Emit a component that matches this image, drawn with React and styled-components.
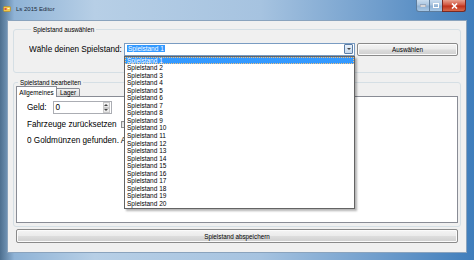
import React from "react";
import styled, { createGlobalStyle } from "styled-components";

const Global = createGlobalStyle`
  html, body { margin: 0; padding: 0; background: #fff; }
  * { box-sizing: border-box; }
  body { font-family: "Liberation Sans", Arial, sans-serif; }
`;

const Window = styled.div`
  width: 474px;
  height: 260px;
  display: flex;
  flex-direction: column;
  padding: 0 7px 7px 7px;
  background: linear-gradient(to right, #4d6f8f 0%, #8fb3d6 3%, #b7cfe6 20%, #a6c3e0 55%, #6f9dcc 80%, #3f7dbb 100%);
  position: relative;
`;

const TitleBar = styled.div`
  height: 20px;
  display: flex;
  align-items: flex-start;
  margin: 0 -7px;
  padding: 0 8px 0 3px;
`;

const TitleIcon = styled.svg`
  width: 8px;
  height: 8px;
  margin-top: 5px;
  flex: none;
`;

const TitleText = styled.div`
  font-size: 6px;
  color: #1a2a3a;
  margin-left: 5px;
  margin-top: 6px;
  line-height: 7px;
  flex: 1;
`;

const CaptionGroup = styled.div`
  display: flex;
  align-items: flex-start;
`;

const CaptionButton = styled.div`
  width: ${p => p.$w}px;
  height: 12px;
  border: 1px solid ${p => (p.$close ? "#7a2a22" : "#5d7c9c")};
  border-top: none;
  border-radius: ${p => p.$radius};
  background: ${p =>
    p.$close
      ? "linear-gradient(to bottom, #e8a290 0%, #d2563f 45%, #c0321b 55%, #d66a4c 100%)"
      : "linear-gradient(to bottom, #c9dcef 0%, #a9c4df 45%, #8eb0d3 55%, #a8c8e6 100%)"};
  display: flex;
  align-items: center;
  justify-content: center;
  margin-left: -1px;
`;

const Client = styled.div`
  flex: 1;
  background: #f0f0f0;
  display: flex;
  flex-direction: column;
  padding: 5px 5px 0 5px;
  border: 1px solid #8aa3bd;
`;

const Group = styled.fieldset`
  margin: ${p => p.$mt || 0}px 0 0 0;
  padding: ${p => p.$pad};
  border: 1px solid #d5dfe5;
  border-radius: 3px;
  min-width: 0;
  height: ${p => p.$h}px;
  flex: none;
`;

const Legend = styled.legend`
  font-size: 6.3px;
  line-height: 7px;
  color: #000;
  padding: 0 2px;
  margin-left: 2px;
`;

const SelectRow = styled.div`
  display: flex;
  align-items: center;
  height: 14px;
`;

const BigLabel = styled.div`
  font-size: 8.2px;
  color: #000;
  white-space: nowrap;
  width: ${p => (p.$w ? `${p.$w}px` : "auto")};
  overflow: hidden;
  flex: none;
`;

const Combo = styled.div`
  position: relative;
  width: 231px;
  height: 13px;
  border: 1px solid #7a9cc2;
  background: #fff;
  display: flex;
  align-items: center;
  padding: 0 1px 0 2px;
  flex: none;
`;

const ComboText = styled.span`
  flex: 1;
  font-size: 6.5px;
  line-height: 8px;
  span {
    background: #3399ff;
    color: #fff;
    padding: 0 1px;
  }
`;

const ComboArrow = styled.div`
  width: 9px;
  height: 10px;
  border: 1px solid #5a7da6;
  border-radius: 1px;
  background: linear-gradient(to bottom, #eaf2fb, #c4d7ec);
  display: flex;
  align-items: center;
  justify-content: center;
`;

const Popup = styled.div`
  position: absolute;
  left: -1px;
  top: 12px;
  width: 231px;
  background: #fff;
  border: 1px solid #646464;
  box-shadow: 2px 2px 2px rgba(0, 0, 0, 0.3);
  z-index: 5;
  display: flex;
  flex-direction: column;
  padding-bottom: 1px;
`;

const PopupItem = styled.div`
  height: 7.55px;
  font-size: 6.5px;
  line-height: 7.55px;
  padding-left: 2px;
  color: ${p => (p.$sel ? "#fff" : "#000")};
  background: ${p => (p.$sel ? "#3399ff" : "transparent")};
  outline: ${p => (p.$sel ? "1px dotted #f0c080" : "none")};
  outline-offset: -1px;
  white-space: nowrap;
`;

const Button = styled.div`
  height: ${p => p.$h}px;
  width: ${p => (p.$w ? `${p.$w}px` : "auto")};
  border: 1px solid #8a8a8a;
  border-radius: 2px;
  background: linear-gradient(to bottom, #f4f4f4 0%, #ebebeb 48%, #dddddd 52%, #cfcfcf 100%);
  box-shadow: inset 0 0 0 1px #fbfbfb;
  font-size: 6.3px;
  color: #000;
  display: flex;
  align-items: center;
  justify-content: center;
  flex: none;
  margin-left: ${p => p.$ml || 0}px;
`;

const Tabs = styled.div`
  display: flex;
  align-items: flex-end;
  height: 11px;
  position: relative;
  z-index: 1;
`;

const Tab = styled.div`
  height: ${p => (p.$active ? 11 : 9)}px;
  width: ${p => p.$w}px;
  border: 1px solid #898c95;
  border-bottom: ${p => (p.$active ? "none" : "1px solid #898c95")};
  background: ${p => (p.$active ? "#fff" : "linear-gradient(to bottom, #f2f2f2, #dcdcdc)")};
  font-size: 6.3px;
  display: flex;
  align-items: center;
  justify-content: center;
  margin-left: ${p => p.$ml || 0}px;
  border-radius: 1px 1px 0 0;
`;

const TabPanel = styled.div`
  margin-top: -1px;
  height: 127px;
  background: #fff;
  border: 1px solid #898c95;
  display: flex;
  flex-direction: column;
  padding: 4px 0 0 10px;
  gap: 5px;
`;

const FieldRow = styled.div`
  display: flex;
  align-items: center;
  height: ${p => p.$h}px;
`;

const Spinner = styled.div`
  width: 59px;
  height: 13px;
  border: 1px solid #abadb3;
  display: flex;
  align-items: center;
  margin-left: 6px;
  background: #fff;
`;

const SpinText = styled.span`
  flex: 1;
  font-size: 8.2px;
  padding-left: 2px;
`;

const SpinButtons = styled.div`
  width: 7px;
  height: 11px;
  display: flex;
  flex-direction: column;
  margin-right: 1px;
`;

const SpinHalf = styled.div`
  flex: 1;
  border: 1px solid #c8c8c8;
  background: linear-gradient(to bottom, #f6f6f6, #e4e4e4);
  display: flex;
  align-items: center;
  justify-content: center;
`;

const Check = styled.div`
  width: 7px;
  height: 7px;
  border: 1px solid #8f8f8f;
  background: linear-gradient(135deg, #dcdcdc, #fafafa);
  margin-left: 4px;
`;

const SaveRow = styled.div`
  padding: 2px 3px 0 3px;
`;

const items = Array.from({ length: 20 }, (_, i) => `Spielstand ${i + 1}`);

const Tri = ({ up }) => (
  <svg width="4" height="2" viewBox="0 0 4 2">
    <path d={up ? "M0 2 L2 0 L4 2 Z" : "M0 0 L4 0 L2 2 Z"} fill="#444" />
  </svg>
);

export default function App() {
  return (
    <>
      <Global />
      <Window>
        <TitleBar>
          <TitleIcon viewBox="0 0 8 8">
            <rect x="0.5" y="1.5" width="7" height="5" rx="1" fill="#f2c94c" stroke="#b58a1c" strokeWidth="0.6" />
            <rect x="1.5" y="3" width="2" height="2" fill="#d9534f" />
            <rect x="4.5" y="3" width="2" height="1" fill="#fff6d0" />
          </TitleIcon>
          <TitleText>Ls 2015 Editor</TitleText>
          <CaptionGroup>
            <CaptionButton $w={14} $radius="0 0 0 3px">
              <svg width="6" height="3" viewBox="0 0 6 3"><rect x="0" y="1" width="6" height="2" fill="#fff" stroke="#334" strokeWidth="0.4" /></svg>
            </CaptionButton>
            <CaptionButton $w={14} $radius="0">
              <svg width="6" height="5" viewBox="0 0 6 5"><rect x="0.5" y="0.5" width="5" height="4" fill="none" stroke="#fff" strokeWidth="1" /></svg>
            </CaptionButton>
            <CaptionButton $w={24} $close $radius="0 0 3px 0">
              <svg width="7" height="6" viewBox="0 0 7 6"><path d="M1 0.5 L6 5.5 M6 0.5 L1 5.5" stroke="#fff" strokeWidth="1.6" /></svg>
            </CaptionButton>
          </CaptionGroup>
        </TitleBar>
        <Client>
          <Group $h={47} $pad="9px 3px 0 15px">
            <Legend>Spielstand auswählen</Legend>
            <SelectRow>
              <BigLabel $w={95}>Wähle deinen Spielstand:</BigLabel>
              <Combo>
                <ComboText><span>Spielstand 1</span></ComboText>
                <ComboArrow>
                  <Tri />
                </ComboArrow>
                <Popup>
                  {items.map((t, i) => (
                    <PopupItem key={t} $sel={i === 0}>{t}</PopupItem>
                  ))}
                </Popup>
              </Combo>
              <Button $w={101} $h={13} $ml={2}>Auswählen</Button>
            </SelectRow>
          </Group>
          <Group $h={148} $mt={6} $pad="0 2px 0 2px">
            <Legend>Spielstand bearbeiten</Legend>
            <Tabs>
              <Tab $active $w={41}>Allgemeines</Tab>
              <Tab $w={24} $ml={-1}>Lager</Tab>
            </Tabs>
            <TabPanel>
              <FieldRow $h={13}>
                <BigLabel>Geld:</BigLabel>
                <Spinner>
                  <SpinText>0</SpinText>
                  <SpinButtons>
                    <SpinHalf><Tri up /></SpinHalf>
                    <SpinHalf><Tri /></SpinHalf>
                  </SpinButtons>
                </Spinner>
              </FieldRow>
              <FieldRow $h={11}>
                <BigLabel>Fahrzeuge zurücksetzen</BigLabel>
                <Check />
              </FieldRow>
              <FieldRow $h={11}>
                <BigLabel $w={99}>0 Goldmünzen gefunden. A</BigLabel>
              </FieldRow>
            </TabPanel>
          </Group>
          <SaveRow>
            <Button $h={14}>Spielstand abspeichern</Button>
          </SaveRow>
        </Client>
      </Window>
    </>
  );
}
